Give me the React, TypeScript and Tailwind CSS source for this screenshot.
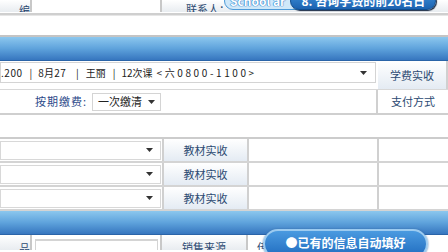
import React from 'react';

const font = { fontFamily: '"Noto Sans CJK SC", "Noto Sans", sans-serif' };

function Arrow() {
  return (
    <svg width="7" height="4" viewBox="0 0 7 4" className="shrink-0">
      <path d="M0 0h7L3.5 4z" fill="#333" />
    </svg>
  );
}

function BlueBar() {
  return (
    <div className="h-[24px] bg-gradient-to-b from-[#8cc7ee] via-[#5fa3dc] to-[#3676bf] border-b border-[#2a64a8]" />
  );
}

function LabelCell({ text, w }: { text: string; w: string }) {
  return (
    <div className={`${w} h-full flex items-center justify-center bg-gradient-to-b from-[#ffffff] to-[#e4ebf3] border-r-2 border-[#d0d0d0] text-[11px] text-[#2c4a72]`}>
      {text}
    </div>
  );
}

function BookRow() {
  return (
    <div className="h-[24px] flex border-b-2 border-[#d4d4d4]">
      <div className="w-[162px] h-full flex items-center pr-[1px]">
        <div className="flex-1 h-[19px] border border-[#d8d8d8] bg-white flex items-center justify-end pr-[7px]">
          <Arrow />
        </div>
      </div>
      <div className="w-[2px] bg-[#d0d0d0]" />
      <LabelCell text="教材实收" w="w-[85px]" />
      <div className="w-[130px] h-full border-r-2 border-[#d0d0d0] bg-white" />
      <div className="flex-1 h-full bg-white" />
    </div>
  );
}

export default function App() {
  return (
    <div className="relative w-[448px] h-[252px] overflow-hidden bg-white" style={font}>
      {/* top row */}
      <div className="h-[12px] flex">
        <div className="w-[32px] h-full bg-gradient-to-b from-[#ffffff] to-[#e8ecf0] border-r-2 border-[#c8c8c8] flex items-end justify-end text-[11px] leading-none text-[#2c4a72] overflow-hidden">
          <span className="-mb-[4px]">编</span>
        </div>
        <div className="w-[130px] h-full bg-white border-r-2 border-[#c8c8c8]" />
        <div className="flex-1 h-full bg-gradient-to-b from-[#ffffff] to-[#e8ecf0] flex items-end pl-[24px] text-[11px] leading-none text-[#2c4a72] overflow-hidden">
          <span className="-mb-[3px]">联系人：</span>
        </div>
      </div>
      <div className="h-[3px] mt-[1px] bg-[#cfcfcf] border-b border-[#e6e6e6]" />
      <div className="h-[19px] bg-white" />
      <div className="h-[2px] bg-[#c4c4c4]" />
      <BlueBar />

      {/* course rows */}
      <div className="flex h-[29px] border-b border-[#d8d8d8]">
        <div className="w-[378px] h-full flex items-start pt-[1px] pr-[2px]">
          <div className="flex-1 h-[21px] border border-[#d4d4d4] bg-white flex items-center pr-[8px] overflow-hidden text-[10px] text-[#222] whitespace-nowrap">
            <span className="-ml-[6px] tracking-[0.5px]">1.200</span>
            <span className="ml-[7px]">|</span>
            <span className="ml-[6px] tracking-[0.3px]">8月27</span>
            <span className="ml-[10px]">|</span>
            <span className="ml-[7px]">王丽</span>
            <span className="ml-[7px]">|</span>
            <span className="ml-[6px]">12次课</span>
            <span className="ml-[4px] tracking-[2.6px]">&lt;六0800-1100&gt;</span>
            <span className="flex-1" />
            <Arrow />
          </div>
        </div>
        <LabelCell text="学费实收" w="flex-1" />
      </div>
      <div className="flex h-[25px] border-b-2 border-[#cfcfcf]">
        <div className="w-[378px] h-full flex items-center border-r-2 border-[#d0d0d0]">
          <span className="ml-[35px] text-[11px] text-[#2c4a8a] tracking-[1px] whitespace-nowrap">按期缴费:</span>
          <div className="ml-[5px] w-[69px] h-[18px] border border-[#d4d4d4] bg-white flex items-center justify-between pl-[5px] pr-[5px]">
            <span className="text-[11px] text-[#222] whitespace-nowrap">一次缴清</span>
            <Arrow />
          </div>
        </div>
        <div className="flex-1 h-full flex items-center justify-center bg-white text-[11px] text-[#2c4a72]">
          支付方式
        </div>
      </div>
      <div className="h-[24px] bg-white border-b-2 border-[#cccccc]" />

      <BookRow />
      <BookRow />
      <BookRow />
      <BlueBar />

      {/* bottom row */}
      <div className="h-[15px] flex">
        <div className="w-[32px] h-full bg-gradient-to-b from-[#ffffff] to-[#e8ecf0] border-r-2 border-[#c8c8c8] flex items-start justify-end text-[11px] leading-none text-[#2c4a72] overflow-hidden">
          <span className="mt-[8px]">品</span>
        </div>
        <div className="w-[130px] h-full flex items-start pl-[3px] pt-[4px] pr-[2px] border-r-2 border-[#c8c8c8]">
          <div className="flex-1 h-full border-t-2 border-l border-r border-[#d4d4d4]" />
        </div>
        <div className="w-[86px] h-full bg-gradient-to-b from-[#ffffff] to-[#e8ecf0] border-r-2 border-[#c8c8c8] flex items-start justify-center text-[11px] leading-none text-[#2c4a72] overflow-hidden">
          <span className="mt-[7px]">销售来源</span>
        </div>
        <div className="flex-1 h-full flex items-start pl-[9px] text-[11px] leading-none text-[#2c4a72] overflow-hidden">
          <span className="mt-[7px]">传真：</span>
        </div>
      </div>

      {/* top overlay badge */}
      <div className="absolute top-[-8px] left-[224px] flex items-center">
        <div className="h-[18px] pl-[5px] pr-[14px] rounded-l-full bg-[#cfe8f9] border border-[#4d9ad8] flex items-center text-[12px] text-white font-bold [text-shadow:0_0_1px_#2b7cc8,0_0_1px_#2b7cc8,0_0_1px_#2b7cc8]">
          School ar
        </div>
        <div className="-ml-[10px] w-[146px] h-[18px] rounded-full bg-gradient-to-b from-[#3d8fd8] to-[#1b62b0] border border-[#0e4c8e] shadow-[1px_1px_1px_#1a2a44] flex items-center justify-center text-[12px] text-white font-bold whitespace-nowrap">
          8. 咨询学费的前20名日
        </div>
      </div>

      {/* bottom overlay badge */}
      <div className="absolute top-[229px] left-[263px] w-[165px] h-[30px] rounded-full bg-gradient-to-b from-[#4a9ae0] to-[#1f6cbf] border-2 border-[#9ccbf0] flex items-start justify-center pt-[3px] text-[12px] font-bold text-white shadow-[0_0_2px_#3a6fa8]">
        ●已有的信息自动填好
      </div>
    </div>
  );
}
